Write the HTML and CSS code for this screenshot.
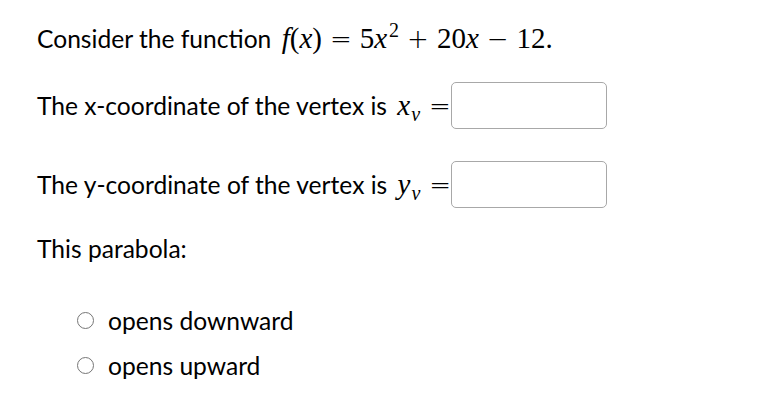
FILE: index.html
```html
<!DOCTYPE html>
<html>
<head>
<meta charset="utf-8">
<link rel="stylesheet" href="styles.css">
</head>
<body>
<div class="problem">
  <p class="line l1">Consider the function <span class="math"><i>f</i>(<i>x</i>)<span class="op rel">=</span>5<i>x</i><sup>2</sup><span class="op bin">+</span>20<i>x</i><span class="op bin">−</span>12.</span></p>
  <p class="line l2">The x-coordinate of the vertex is <span class="math"><i>x</i><sub><i>v</i></sub><span class="op eq">=</span></span><input class="answer" type="text"></p>
  <p class="line l3">The y-coordinate of the vertex is <span class="math"><i>y</i><sub><i>v</i></sub><span class="op eq">=</span></span><input class="answer" type="text"></p>
  <p class="line l4">This parabola:</p>
  <div class="choices">
    <label class="choice"><span class="radio"></span>opens downward</label>
    <label class="choice"><span class="radio"></span>opens upward</label>
  </div>
</div>
</body>
</html>
```
FILE: styles.css
```css
html, body { margin: 0; padding: 0; background: #fff; }
body { font-family: Lato, "Noto Sans", sans-serif; font-size: 24.6px; color: #000; }
.problem { padding: 18px 0 0 37px; }
.line { margin: 0; display: flex; align-items: center; white-space: pre; }
.l1 { height: 40px; }
.l2 { margin-top: 23px; height: 48px; }
.l3 { margin-top: 31px; height: 48px; }
.l4 { margin-top: 20px; height: 40px; }
.math { font-family: "Liberation Serif", "DejaVu Serif", serif; font-size: 29px; line-height: 1; margin-left: 4px; }
.math i { font-style: italic; }
.math sup { font-size: 20px; vertical-align: 0.55em; line-height: 0; margin-left: 2px; }
.math sub { font-size: 20px; vertical-align: -0.3em; line-height: 0; margin-left: 1px; }
.op { font-family: "DejaVu Sans", sans-serif; font-size: 26px; font-weight: 300; }
.rel { padding: 0 8px; }
.bin { padding: 0 8px; }
.eq { padding: 0 0 0 9px; }
.answer { width: 156px; height: 47px; box-sizing: border-box; border: 1px solid #a8a8a8; border-radius: 5px; margin: 0; padding: 0 6px; font-size: 20px; }
.choices { display: flex; flex-direction: column; gap: 17px; padding: 38px 0 0 40px; }
.choice { display: flex; align-items: center; height: 28px; }
.radio { width: 15px; height: 15px; border: 1px solid #767676; border-radius: 50%; margin-right: 14px; }
```
